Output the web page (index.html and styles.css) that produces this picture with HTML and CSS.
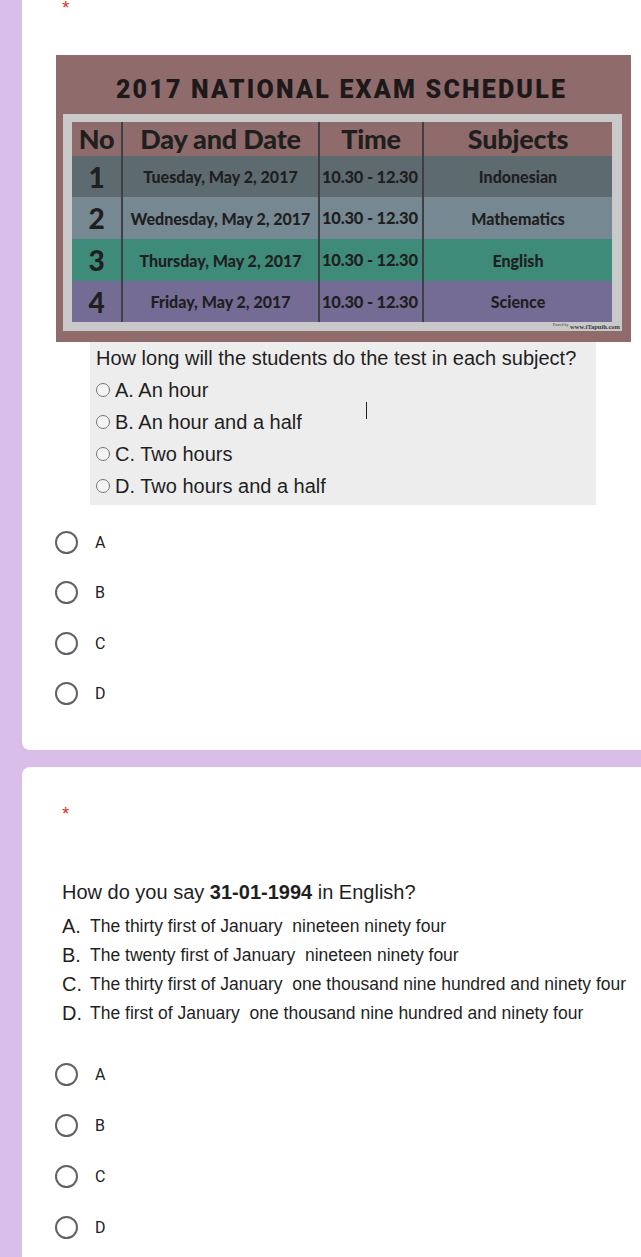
FILE: index.html
```html
<!DOCTYPE html>
<html lang="en">

<head>
  <meta charset="UTF-8" />
  <meta name="viewport" content="width=device-width, initial-scale=1" />
  <title>Quiz</title>
  <link rel="stylesheet" href="styles.css">
</head>

<body>
  <div class="page">
    <section class="card card-first">
      <div class="req req-top">*</div>

      <div class="schedule">
        <div class="sched-title">2017 NATIONAL EXAM SCHEDULE</div>
        <div class="sched-frame">
          <table class="sched">
            <colgroup>
              <col class="c-no">
              <col class="c-day">
              <col class="c-time">
              <col class="c-subj">
            </colgroup>
            <thead>
              <tr>
                <th>No</th>
                <th>Day and Date</th>
                <th>Time</th>
                <th>Subjects</th>
              </tr>
            </thead>
            <tbody>
              <tr class="row-1">
                <td class="num">1</td>
                <td>Tuesday, May 2, 2017</td>
                <td class="time">10.30 - 12.30</td>
                <td>Indonesian</td>
              </tr>
              <tr class="row-2">
                <td class="num">2</td>
                <td>Wednesday, May 2, 2017</td>
                <td class="time">10.30 - 12.30</td>
                <td>Mathematics</td>
              </tr>
              <tr class="row-3">
                <td class="num">3</td>
                <td>Thursday, May 2, 2017</td>
                <td class="time">10.30 - 12.30</td>
                <td>English</td>
              </tr>
              <tr class="row-4">
                <td class="num">4</td>
                <td>Friday, May 2, 2017</td>
                <td class="time">10.30 - 12.30</td>
                <td>Science</td>
              </tr>
            </tbody>
          </table>
          <div class="watermark"><small>Posted by</small> www.iTapuih.com</div>
        </div>
      </div>

      <div class="question-box">
        <p>How long will the students do the test in each subject?</p>
        <p><span class="mini-radio"></span>A. An hour</p>
        <p><span class="mini-radio"></span>B. An hour and a half</p>
        <p><span class="mini-radio"></span>C. Two hours</p>
        <p><span class="mini-radio"></span>D. Two hours and a half</p>
        <span class="text-cursor"></span>
      </div>

      <div class="choices">
        <label class="choice"><span class="radio"></span><span class="choice-label">A</span></label>
        <label class="choice"><span class="radio"></span><span class="choice-label">B</span></label>
        <label class="choice"><span class="radio"></span><span class="choice-label">C</span></label>
        <label class="choice"><span class="radio"></span><span class="choice-label">D</span></label>
      </div>
    </section>

    <section class="card card-second">
      <div class="req req-second">*</div>

      <div class="date-question">
        <p class="dq-title">How do you say <b>31-01-1994</b> in English?</p>
        <div class="dq-opt"><span class="dq-letter">A.</span><span>The thirty first of January&nbsp; nineteen ninety four</span></div>
        <div class="dq-opt"><span class="dq-letter">B.</span><span>The twenty first of January&nbsp; nineteen ninety four</span></div>
        <div class="dq-opt"><span class="dq-letter">C.</span><span>The thirty first of January&nbsp; one thousand nine hundred and ninety four</span></div>
        <div class="dq-opt"><span class="dq-letter">D.</span><span>The first of January&nbsp; one thousand nine hundred and ninety four</span></div>
      </div>

      <div class="choices choices-second">
        <label class="choice"><span class="radio"></span><span class="choice-label">A</span></label>
        <label class="choice"><span class="radio"></span><span class="choice-label">B</span></label>
        <label class="choice"><span class="radio"></span><span class="choice-label">C</span></label>
        <label class="choice"><span class="radio"></span><span class="choice-label">D</span></label>
      </div>
    </section>
  </div>
</body>

</html>
```

FILE: styles.css
```css
body {
  margin: 0;
  background-color: #d8bee9;
  font-family: "Roboto", "Liberation Sans", sans-serif;
  color: #202124;
  overflow: hidden;
}

.page {
  padding-left: 22px;
}

.card {
  background-color: #fff;
  padding-left: 33px;
}

.card-first {
  border-radius: 0 0 0 8px;
  padding-bottom: 31px;
}

.card-second {
  margin-top: 17px;
  border-radius: 8px 0 0 0;
  padding-top: 37px;
  padding-bottom: 10px;
}

.req {
  color: #d93025;
  font-family: "Liberation Sans", Arial, sans-serif;
  font-size: 19px;
  line-height: 20px;
  height: 20px;
  margin-left: 7px;
}

.req-top {
  margin-top: -2px;
  margin-bottom: 37px;
}

/* schedule picture */

.schedule {
  width: 575px;
  height: 287px;
  margin-left: 1px;
  background-color: #8f6b6c;
  box-sizing: border-box;
  overflow: hidden;
}

.sched-title {
  padding-top: 20px;
  height: 30px;
  line-height: 30px;
  margin-bottom: 9px;
  text-align: center;
  font-family: "Roboto", sans-serif;
  font-weight: 900;
  font-size: 25px;
  letter-spacing: 2.2px;
  color: #1d191a;
  padding-right: 4px;
}

.sched-frame {
  width: 559px;
  margin-left: 7px;
  padding: 8px 10px 0 9px;
  box-sizing: border-box;
  background-color: #c9c9c9;
}

.sched {
  border-collapse: collapse;
  table-layout: fixed;
  width: 540px;
  font-family: "Lato", sans-serif;
  font-weight: 900;
  color: #1f1f1f;
  text-align: center;
}

.c-no { width: 50px; }
.c-day { width: 197px; }
.c-time { width: 104px; }
.c-subj { width: 189px; }

.sched th,
.sched td {
  padding: 0;
  border-left: 2px solid #3d4044;
  white-space: nowrap;
}

.sched th:first-child,
.sched td:first-child {
  border-left: none;
}

.sched thead tr {
  height: 34px;
  background-color: #8f6b6c;
}

.sched th {
  font-size: 27px;
  font-weight: 900;
  line-height: 34px;
  letter-spacing: -0.2px;
}

.sched td {
  font-size: 16px;
  height: 41px;
}

.sched td.num {
  font-size: 28px;
  font-weight: 900;
}

.sched td.time {
  font-size: 16.5px;
  text-align: left;
  padding-left: 2px;
  letter-spacing: -0.2px;
}

.sched .row-1 { background-color: #5d6a70; }
.sched .row-2 { background-color: #768892; height: 42px; }
.sched .row-3 { background-color: #3e8b7a; height: 42px; }
.sched .row-4 { background-color: #746c95; }

.watermark {
  height: 9px;
  margin-right: -8px;
  text-align: right;
  font-family: "Liberation Serif", serif;
  font-weight: 700;
  font-size: 6.5px;
  line-height: 9px;
  color: #3a3a3a;
}

.watermark small {
  font-size: 4px;
  font-weight: 400;
  vertical-align: top;
  line-height: 5px;
}

/* pasted question */

.question-box {
  position: relative;
  width: 506px;
  margin-left: 35px;
  padding: 0 6px 3px;
  box-sizing: border-box;
  background-color: #ededed;
  font-family: "Liberation Sans", Arial, sans-serif;
  font-size: 20px;
  color: #1f1f1f;
}

.question-box p {
  margin: 0;
  height: 32px;
  line-height: 32px;
  display: flex;
  align-items: center;
  white-space: nowrap;
}

.mini-radio {
  width: 12px;
  height: 12px;
  border: 1px solid #777;
  border-radius: 50%;
  background-color: #f4f4f4;
  margin-right: 5px;
  flex-shrink: 0;
}

.text-cursor {
  position: absolute;
  left: 276px;
  top: 60px;
  width: 1px;
  height: 17px;
  background-color: #222;
}

/* radio answers */

.choices {
  margin-top: 12px;
}

.choice {
  display: flex;
  align-items: center;
  height: 50.5px;
}

.radio {
  width: 19px;
  height: 19px;
  border: 2px solid #5f6368;
  border-radius: 50%;
  flex-shrink: 0;
}

.choice-label {
  margin-left: 17px;
  font-size: 16px;
  color: #202124;
}

/* second question */

.date-question {
  margin-top: 54px;
  font-family: "Liberation Sans", Arial, sans-serif;
  color: #1f1f1f;
}

.dq-title {
  margin: 0 0 5px 7px;
  font-size: 20px;
  line-height: 29px;
}

.dq-opt {
  display: flex;
  align-items: center;
  height: 29px;
  margin-left: 7px;
  line-height: 29px;
  font-size: 17.5px;
  white-space: nowrap;
}

.dq-letter {
  width: 28px;
  flex-shrink: 0;
  font-size: 20px;
}

.choices-second {
  margin-top: 21px;
}

.choices-second .choice {
  height: 51px;
}
```
